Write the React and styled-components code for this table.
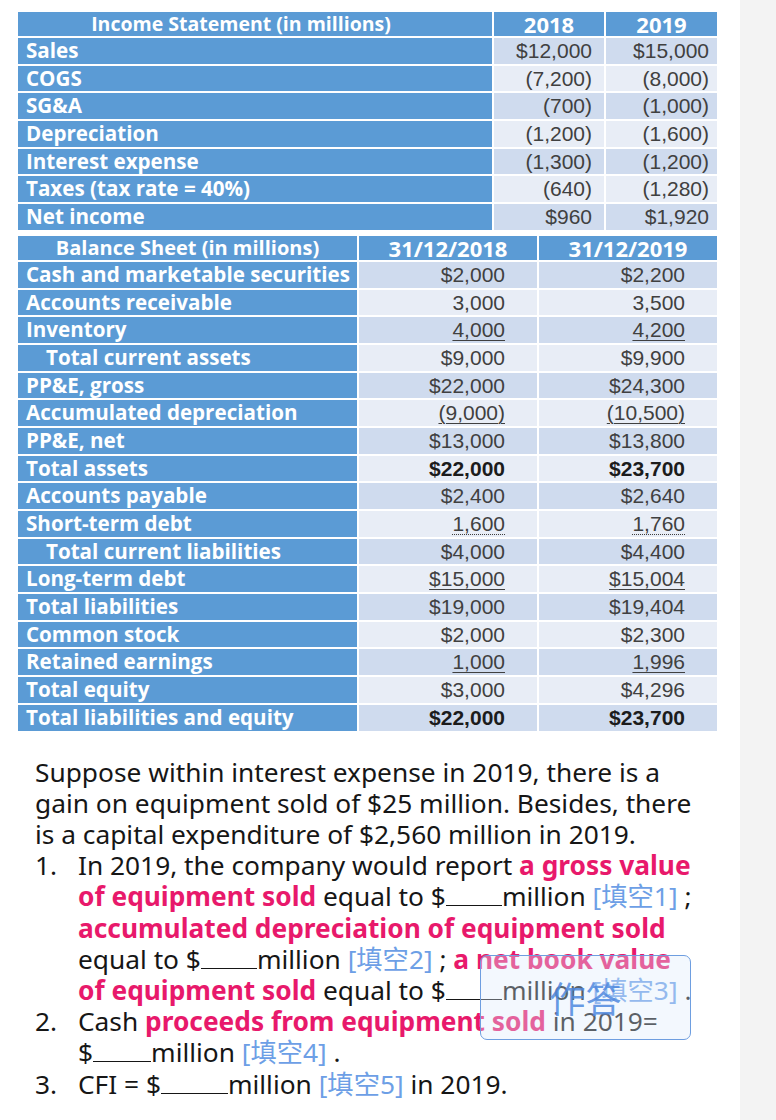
import React from 'react';
import styled, { createGlobalStyle } from 'styled-components';

const GlobalStyle = createGlobalStyle`
  html, body {
    margin: 0;
    padding: 0;
    background: #ffffff;
  }
`;

const Page = styled.div`
  display: flex;
  width: 776px;
  min-height: 1120px;
`;

const Main = styled.div`
  width: 740px;
  box-sizing: border-box;
  padding: 12px 0 0 18px;
  background: #ffffff;
`;

const SideStrip = styled.div`
  flex: 1;
  background: #f3f3f3;
`;

const Sheet = styled.div`
  display: grid;
  grid-template-columns: ${props => props.cols};
  column-gap: 2px;
  row-gap: 2px;
  width: 699px;
  margin-top: ${props => props.top || 0}px;
`;

const HeadCell = styled.div`
  height: 24px;
  line-height: 24px;
  background: #5b9bd5;
  color: #ffffff;
  font-family: "Open Sans", "Noto Sans", sans-serif;
  font-weight: 700;
  font-size: ${props => props.size || 20}px;
  text-align: center;
  white-space: nowrap;
  padding-right: ${props => props.shift || 0}px;
`;

const LabelCell = styled.div`
  height: 25.7px;
  line-height: 25.7px;
  background: #5b9bd5;
  color: #ffffff;
  font-family: "Open Sans", "Noto Sans", sans-serif;
  font-weight: 700;
  font-size: 20.6px;
  padding-left: ${props => (props.indent ? 28 : 8)}px;
  white-space: nowrap;
`;

const ValueCell = styled.div`
  height: 25.7px;
  line-height: 25.7px;
  background: ${props => (props.band ? '#cfdbee' : '#e8edf6')};
  color: ${props => (props.bold ? '#1c1c1c' : '#404040')};
  font-family: "Liberation Sans", Arial, sans-serif;
  font-weight: ${props => (props.bold ? 700 : 400)};
  font-size: 21px;
  text-align: right;
  padding-right: ${props => props.pad}px;
  white-space: nowrap;
`;

const Num = styled.span`
  text-decoration: ${props => (props.line ? 'underline' : 'none')};
  text-decoration-style: ${props => props.line || 'solid'};
  text-decoration-thickness: 1px;
  text-underline-offset: 3px;
`;

const Question = styled.div`
  position: relative;
  margin: 26px 0 0 17px;
  font-family: "Noto Sans", "Open Sans", "Noto Sans CJK SC", sans-serif;
  font-size: 26.3px;
  line-height: 31.2px;
  color: #161616;
  white-space: nowrap;
`;

const Steps = styled.ol`
  list-style: none;
  margin: 0;
  padding: 0;
`;

const Step = styled.li`
  display: grid;
  grid-template-columns: 43px auto;
`;

const Hot = styled.span`
  color: #e8196b;
  font-weight: 700;
`;

const Fill = styled.span`
  color: #6d9fe6;
  font-family: "Noto Sans", "Noto Sans CJK SC", sans-serif;
`;

const Blank = styled.span`
  display: inline-block;
  width: ${props => props.w}px;
  height: 18px;
  border-bottom: 1.5px solid #161616;
  vertical-align: baseline;
`;

const AnswerBox = styled.div`
  position: absolute;
  left: 445px;
  top: 198px;
  width: 211px;
  height: 85px;
  box-sizing: border-box;
  border: 1.5px solid #6e9ee0;
  border-radius: 7px;
  background: rgba(222, 234, 252, 0.35);
  display: flex;
  align-items: center;
  justify-content: center;
  color: rgba(78, 136, 222, 0.85);
  font-family: "Noto Sans CJK SC", sans-serif;
  font-size: 36px;
  line-height: 1;
`;

const income = [
  ['Sales', '$12,000', '$15,000'],
  ['COGS', '(7,200)', '(8,000)'],
  ['SG&A', '(700)', '(1,000)'],
  ['Depreciation', '(1,200)', '(1,600)'],
  ['Interest expense', '(1,300)', '(1,200)'],
  ['Taxes (tax rate = 40%)', '(640)', '(1,280)'],
  ['Net income', '$960', '$1,920'],
];

const balance = [
  { label: 'Cash and marketable securities', a: '$2,000', b: '$2,200' },
  { label: 'Accounts receivable', a: '3,000', b: '3,500' },
  { label: 'Inventory', a: '4,000', b: '4,200', line: 'solid' },
  { label: 'Total current assets', a: '$9,000', b: '$9,900', indent: true },
  { label: 'PP&E, gross', a: '$22,000', b: '$24,300' },
  { label: 'Accumulated depreciation', a: '(9,000)', b: '(10,500)', line: 'solid' },
  { label: 'PP&E, net', a: '$13,000', b: '$13,800' },
  { label: 'Total assets', a: '$22,000', b: '$23,700', bold: true },
  { label: 'Accounts payable', a: '$2,400', b: '$2,640' },
  { label: 'Short-term debt', a: '1,600', b: '1,760', line: 'dotted' },
  { label: 'Total current liabilities', a: '$4,000', b: '$4,400', indent: true },
  { label: 'Long-term debt', a: '$15,000', b: '$15,004', line: 'solid' },
  { label: 'Total liabilities', a: '$19,000', b: '$19,404' },
  { label: 'Common stock', a: '$2,000', b: '$2,300' },
  { label: 'Retained earnings', a: '1,000', b: '1,996', line: 'solid' },
  { label: 'Total equity', a: '$3,000', b: '$4,296' },
  { label: 'Total liabilities and equity', a: '$22,000', b: '$23,700', bold: true },
];

const IncomeStatement = () => (
  <Sheet cols="474px 110px 111px">
    <HeadCell shift={28} size={19.5}>Income Statement (in millions)</HeadCell>
    <HeadCell size={22}>2018</HeadCell>
    <HeadCell size={22}>2019</HeadCell>
    {income.map(([label, a, b], i) => (
      <React.Fragment key={label}>
        <LabelCell>{label}</LabelCell>
        <ValueCell band={i % 2 === 0} pad={12}>{a}</ValueCell>
        <ValueCell band={i % 2 === 0} pad={8}>{b}</ValueCell>
      </React.Fragment>
    ))}
  </Sheet>
);

const BalanceSheet = () => (
  <Sheet cols="339px 178px 178px" top={6}>
    <HeadCell>Balance Sheet (in millions)</HeadCell>
    <HeadCell size={22}>31/12/2018</HeadCell>
    <HeadCell size={22}>31/12/2019</HeadCell>
    {balance.map((row, i) => (
      <React.Fragment key={row.label}>
        <LabelCell indent={row.indent}>{row.label}</LabelCell>
        <ValueCell band={i % 2 === 0} bold={row.bold} pad={32}>
          <Num line={row.line}>{row.a}</Num>
        </ValueCell>
        <ValueCell band={i % 2 === 0} bold={row.bold} pad={32}>
          <Num line={row.line}>{row.b}</Num>
        </ValueCell>
      </React.Fragment>
    ))}
  </Sheet>
);

const QuestionText = () => (
  <Question>
    <div>
      Suppose within interest expense in 2019, there is a<br />
      gain on equipment sold of $25 million. Besides, there<br />
      is a capital expenditure of $2,560 million in 2019.
    </div>
    <Steps>
      <Step>
        <span>1.</span>
        <span>
          In 2019, the company would report <Hot>a gross value</Hot>
          <br />
          <Hot>of equipment sold</Hot> equal to $<Blank w={56} />million <Fill>[填空1]</Fill> ;
          <br />
          <Hot>accumulated depreciation of equipment sold</Hot>
          <br />
          equal to $<Blank w={56} />million <Fill>[填空2]</Fill> ; <Hot>a net book value</Hot>
          <br />
          <Hot>of equipment sold</Hot> equal to $<Blank w={56} />million <Fill>[填空3]</Fill> .
        </span>
      </Step>
      <Step>
        <span>2.</span>
        <span>
          Cash <Hot>proceeds from equipment sold</Hot> in 2019=
          <br />
          $<Blank w={58} />million <Fill>[填空4]</Fill> .
        </span>
      </Step>
      <Step>
        <span>3.</span>
        <span>
          CFI = $<Blank w={67} />million <Fill>[填空5]</Fill> in 2019.
        </span>
      </Step>
    </Steps>
    <AnswerBox>作答</AnswerBox>
  </Question>
);

export default function App() {
  return (
    <>
      <GlobalStyle />
      <Page>
        <Main>
          <IncomeStatement />
          <BalanceSheet />
          <QuestionText />
        </Main>
        <SideStrip />
      </Page>
    </>
  );
}
